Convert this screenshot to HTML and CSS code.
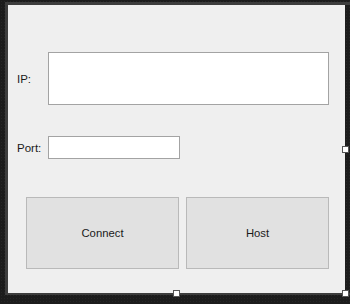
FILE: index.html
```html
<!DOCTYPE html>
<html lang="en">
<head>
  <meta charset="UTF-8" />
  <meta name="viewport" content="width=device-width, initial-scale=1.0"/>
  <title>Form1 [Design]</title>
  <link rel="stylesheet" href="styles.css">
</head>
<body>
  <div class="surface">
    <div class="frame">
      <div class="form">
        <div class="field ip-field">
          <label class="field-label" for="ipBox">IP:</label>
          <textarea class="text-box ip-box" id="ipBox"></textarea>
        </div>

        <div class="field port-field">
          <label class="field-label" for="portBox">Port:</label>
          <input class="text-box port-box" id="portBox" type="text">
        </div>

        <div class="button-row">
          <button class="win-btn connect-btn">Connect</button>
          <button class="win-btn host-btn">Host</button>
        </div>

        <span class="grip grip-right"></span>
        <span class="grip grip-bottom"></span>
        <span class="grip grip-corner"></span>
      </div>
    </div>
  </div>
</body>
</html>
```

FILE: styles.css
```css
body {
  margin: 0;
  background-color: #1c1c1c;
  font-family: 'Liberation Sans', Arial, sans-serif;
}

.surface {
  width: 350px;
  height: 304px;
  padding: 2px 0 0 5px;
  box-sizing: border-box;
  background-image: radial-gradient(#262626 1px, transparent 1px);
  background-size: 3px 3px;
}

.frame {
  width: 343px;
  border: 3px solid #3d3d3d;
  border-bottom-width: 2px;
}

.form {
  position: relative;
  width: 337px;
  height: 288px;
  background-color: #efefef;
  padding: 47px 0 0 9px;
  box-sizing: border-box;
  display: flex;
  flex-direction: column;
}

.field {
  display: flex;
  align-items: center;
}

.field-label {
  width: 31px;
  font-size: 11.5px;
  color: #1a1a1a;
}

.text-box {
  margin: 0;
  padding: 0;
  border: 1px solid #a3a3a3;
  background-color: #fff;
  box-sizing: border-box;
  resize: none;
  outline: none;
}

.ip-box {
  width: 281px;
  height: 53px;
}

.port-field {
  margin-top: 31px;
}

.port-box {
  width: 132px;
  height: 23px;
}

.button-row {
  display: flex;
  gap: 7px;
  margin: 38px 0 0 9px;
}

.win-btn {
  height: 72px;
  margin: 0;
  background-color: #e1e1e1;
  border: 1px solid #b9b9b9;
  font-family: 'Liberation Sans', Arial, sans-serif;
  font-size: 11.3px;
  color: #1a1a1a;
  padding: 0;
}

.connect-btn {
  width: 153px;
}

.host-btn {
  width: 143px;
}

.grip {
  position: absolute;
  width: 5px;
  height: 5px;
  background-color: #fff;
  border: 1px solid #555;
}

.grip-right {
  right: -4px;
  top: 141px;
}

.grip-bottom {
  left: 165px;
  bottom: -4px;
}

.grip-corner {
  right: -4px;
  bottom: -4px;
}
```
